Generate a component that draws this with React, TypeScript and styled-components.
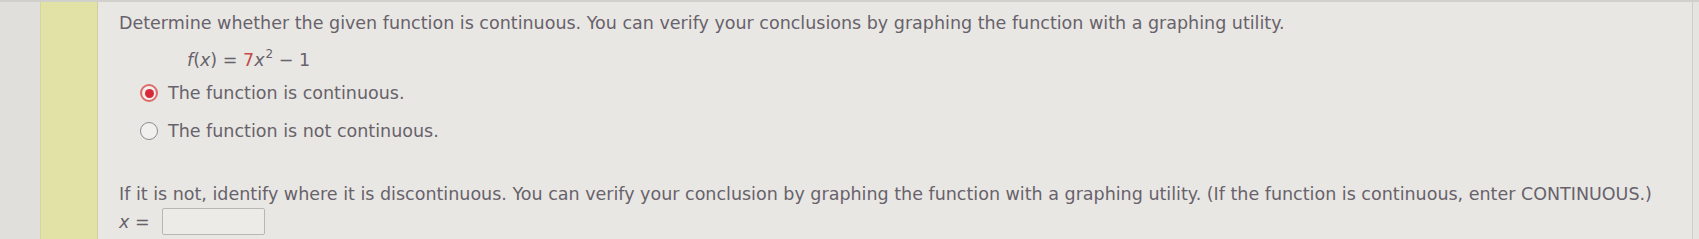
import React from 'react';
import styled, { createGlobalStyle } from 'styled-components';

const Global = createGlobalStyle`
  html, body {
    margin: 0;
    padding: 0;
    background: #e6e4e0;
  }
  body {
    font-family: 'DejaVu Sans', Verdana, sans-serif;
  }
`;

const Page = styled.div`
  display: flex;
  height: 239px;
  border-top: 2px solid #d2d0cc;
  box-sizing: border-box;
`;

const Gutter = styled.div`
  width: 40px;
  background: #e0dfdb;
`;

const Marker = styled.div`
  width: 56px;
  background: #e3e2a6;
  border-left: 1px solid #d6d59a;
  border-right: 1px solid #cfcfa2;
`;

const Content = styled.div`
  flex: 1;
  padding: 10px 0 0 21px;
  border-right: 1px solid #cfcdc9;
  margin-right: 6px;
  color: #67626b;
  font-size: 17.5px;
  background: #e9e7e3;
`;

const Line = styled.div<{ $indent?: number; $top?: number }>`
  margin-left: ${(p) => p.$indent ?? 0}px;
  margin-top: ${(p) => p.$top ?? 0}px;
  line-height: 22px;
  height: 22px;
  white-space: nowrap;
`;

const Red = styled.span`
  color: #c64848;
`;

const Sup = styled.sup`
  font-size: 12px;
  line-height: 0;
  vertical-align: 0;
  position: relative;
  top: -8px;
  margin-left: 1px;
`;

const Options = styled.div`
  display: flex;
  flex-direction: column;
  gap: 16px;
  margin: 11px 0 0 21px;
`;

const Option = styled.label`
  display: flex;
  align-items: center;
  gap: 10px;
  line-height: 22px;
  height: 22px;
`;

const Radio = styled.span<{ $checked?: boolean }>`
  width: 18px;
  height: 18px;
  border-radius: 50%;
  box-sizing: border-box;
  border: ${(p) => (p.$checked ? '2.5px solid #df6a6c' : '1.5px solid #8d8a90')};
  background: #f1f0ee;
  display: flex;
  align-items: center;
  justify-content: center;
  &::after {
    content: '';
    width: 9px;
    height: 9px;
    border-radius: 50%;
    background: ${(p) => (p.$checked ? '#d8293a' : 'transparent')};
  }
`;

const AnswerRow = styled.div`
  display: flex;
  align-items: center;
  gap: 12px;
  margin-top: 3px;
`;

const Input = styled.span`
  display: inline-block;
  width: 103px;
  height: 27px;
  box-sizing: border-box;
  border: 1px solid #b9b7b4;
  border-radius: 2px;
  background: #ecebe8;
`;

export default function App() {
  return (
    <>
      <Global />
      <Page>
        <Gutter />
        <Marker />
        <Content>
          <Line>
            Determine whether the given function is continuous. You can verify your conclusions by graphing the
            function with a graphing utility.
          </Line>
          <Line $indent={68} $top={15}>
            <i>f</i>(<i>x</i>) = <Red>7</Red>
            <i>x</i>
            <Sup>2</Sup> − 1
          </Line>
          <Options>
            <Option>
              <Radio $checked />
              The function is continuous.
            </Option>
            <Option>
              <Radio />
              The function is not continuous.
            </Option>
          </Options>
          <Line $top={41}>
            If it is not, identify where it is discontinuous. You can verify your conclusion by graphing the function
            with a graphing utility. (If the function is continuous, enter CONTINUOUS.)
          </Line>
          <AnswerRow>
            <span>
              <i>x</i> =
            </span>
            <Input />
          </AnswerRow>
        </Content>
      </Page>
    </>
  );
}
